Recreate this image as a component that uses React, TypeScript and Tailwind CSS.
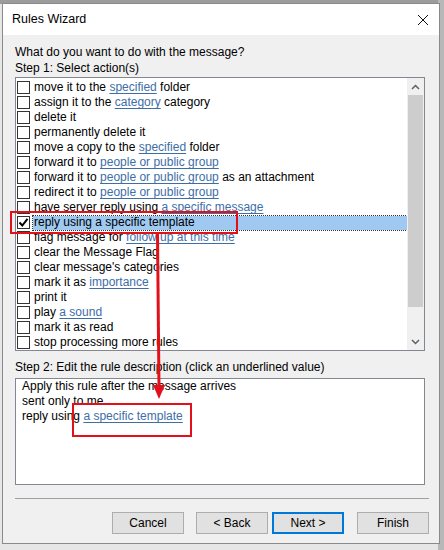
import React from "react";

type Part = { t: string; link?: boolean };

const actions: Part[][] = [
  [{ t: "move it to the " }, { t: "specified", link: true }, { t: " folder" }],
  [{ t: "assign it to the " }, { t: "category", link: true }, { t: " category" }],
  [{ t: "delete it" }],
  [{ t: "permanently delete it" }],
  [{ t: "move a copy to the " }, { t: "specified", link: true }, { t: " folder" }],
  [{ t: "forward it to " }, { t: "people or public group", link: true }],
  [{ t: "forward it to " }, { t: "people or public group", link: true }, { t: " as an attachment" }],
  [{ t: "redirect it to " }, { t: "people or public group", link: true }],
  [{ t: "have server reply using " }, { t: "a specific message", link: true }],
  [{ t: "reply using a specific template" }],
  [{ t: "flag message for " }, { t: "follow up at this time", link: true }],
  [{ t: "clear the Message Flag" }],
  [{ t: "clear message's categories" }],
  [{ t: "mark it as " }, { t: "importance", link: true }],
  [{ t: "print it" }],
  [{ t: "play " }, { t: "a sound", link: true }],
  [{ t: "mark it as read" }],
  [{ t: "stop processing more rules" }],
];

const SELECTED = 9;

function Link({ children }: { children: React.ReactNode }) {
  return (
    <span className="text-[#3d6ea8] underline underline-offset-2 decoration-[#3d6ea8]">
      {children}
    </span>
  );
}

function Checkbox({ checked }: { checked?: boolean }) {
  return (
    <div className="w-[13px] h-[13px] shrink-0 border border-[#333] bg-white flex items-center justify-center">
      {checked && (
        <svg width="11" height="11" viewBox="0 0 11 11">
          <path d="M1.5 5.5 L4.3 8.5 L9.5 1.8" fill="none" stroke="#000" strokeWidth="2" />
        </svg>
      )}
    </div>
  );
}

function Button({ label, primary }: { label: string; primary?: boolean }) {
  return (
    <button
      className={`w-[72px] h-[22px] bg-[#e1e1e1] text-[12px] text-black flex items-center justify-center ${
        primary ? "border-2 border-[#0078d7]" : "border border-[#adadad]"
      }`}
    >
      {label}
    </button>
  );
}

export default function App() {
  return (
    <div className="relative w-[444px] h-[550px] overflow-hidden bg-[#e6e6e6] font-['Liberation_Sans',Arial,sans-serif] text-[12px] leading-[15px] text-black">
      {/* window behind */}
      <div className="absolute left-0 top-0 w-[444px] h-[4px] bg-[#9c9c9c]" />
      <div className="absolute right-0 top-0 w-[6px] h-[550px] bg-[#b8b8b8]" />

      <div className="relative ml-[2px] mt-[3px] w-[438px] h-[541px] border border-[#8a8a8a] bg-[#f0f0f0] flex flex-col">
        {/* Title bar */}
        <div className="h-[31px] bg-white flex items-center justify-between pl-[9px] pr-[10px]">
          <span className="text-[12.5px]">Rules Wizard</span>
          <svg width="12" height="12" viewBox="0 0 12 12">
            <path d="M1 1 L11 11 M11 1 L1 11" stroke="#111" strokeWidth="1" />
          </svg>
        </div>

        <div className="flex flex-col px-[12px] pt-[9px]">
          <div className="leading-[16px]">What do you want to do with the message?</div>
          <div className="leading-[16px]">Step 1: Select action(s)</div>

          {/* Action list */}
          <div className="mt-[1px] h-[274px] w-[410px] border border-[#828790] bg-white flex">
            <div className="flex-1 pt-[2px] pl-[1px]">
              {actions.map((parts, i) => (
                <div key={i} className="h-[15px] flex items-center whitespace-nowrap">
                  <Checkbox checked={i === SELECTED} />
                  <div
                    className={`ml-[3px] pl-[1px] h-[14px] flex items-center ${
                      i === SELECTED
                        ? "flex-1 bg-[#9fc9f0] outline outline-1 outline-dotted outline-[#333]"
                        : ""
                    }`}
                  >
                    {parts.map((p, j) =>
                      p.link ? <Link key={j}>{p.t}</Link> : <span key={j} className="whitespace-pre">{p.t}</span>
                    )}
                  </div>
                </div>
              ))}
            </div>
            {/* Scrollbar */}
            <div className="w-[17px] bg-[#f0f0f0] flex flex-col items-center">
              <div className="h-[17px] flex items-center justify-center">
                <svg width="9" height="6" viewBox="0 0 9 6">
                  <path d="M1 5 L4.5 1.5 L8 5" fill="none" stroke="#606060" strokeWidth="1.5" />
                </svg>
              </div>
              <div className="w-[15px] h-[212px] bg-[#cdcdcd]" />
              <div className="flex-1" />
              <div className="h-[17px] flex items-center justify-center">
                <svg width="9" height="6" viewBox="0 0 9 6">
                  <path d="M1 1 L4.5 4.5 L8 1" fill="none" stroke="#606060" strokeWidth="1.5" />
                </svg>
              </div>
            </div>
          </div>

          <div className="mt-[8px] leading-[16px]">Step 2: Edit the rule description (click an underlined value)</div>

          {/* Description box */}
          <div className="mt-[3px] h-[107px] w-[410px] border border-[#828790] bg-white pl-[6px]">
            <div>Apply this rule after the message arrives</div>
            <div>sent only to me</div>
            <div>
              reply using <Link>a specific template</Link>
            </div>
          </div>

          {/* Separator */}
          <div className="mt-[13px] h-[1px] w-[414px] bg-[#a0a0a0]" />

          {/* Buttons */}
          <div className="mt-[13px] flex justify-end w-[414px]">
            <Button label="Cancel" />
            <div className="w-[12px]" />
            <Button label="< Back" />
            <div className="w-[4px]" />
            <Button label="Next >" primary />
            <div className="w-[13px]" />
            <Button label="Finish" />
          </div>
        </div>
      </div>

      {/* Annotations */}
      <div className="absolute left-[10px] top-[211px] w-[228px] h-[23px] border-2 border-[#e3101a]" />
      <div className="absolute left-[72px] top-[403px] w-[120px] h-[34px] border-2 border-[#e3101a]" />
      <svg className="absolute left-0 top-0" width="444" height="550">
        <line x1="157.5" y1="233" x2="159" y2="388" stroke="#e3101a" strokeWidth="3" />
        <path d="M153 385 L165 385 L159 399 Z" fill="#e3101a" />
      </svg>
    </div>
  );
}
